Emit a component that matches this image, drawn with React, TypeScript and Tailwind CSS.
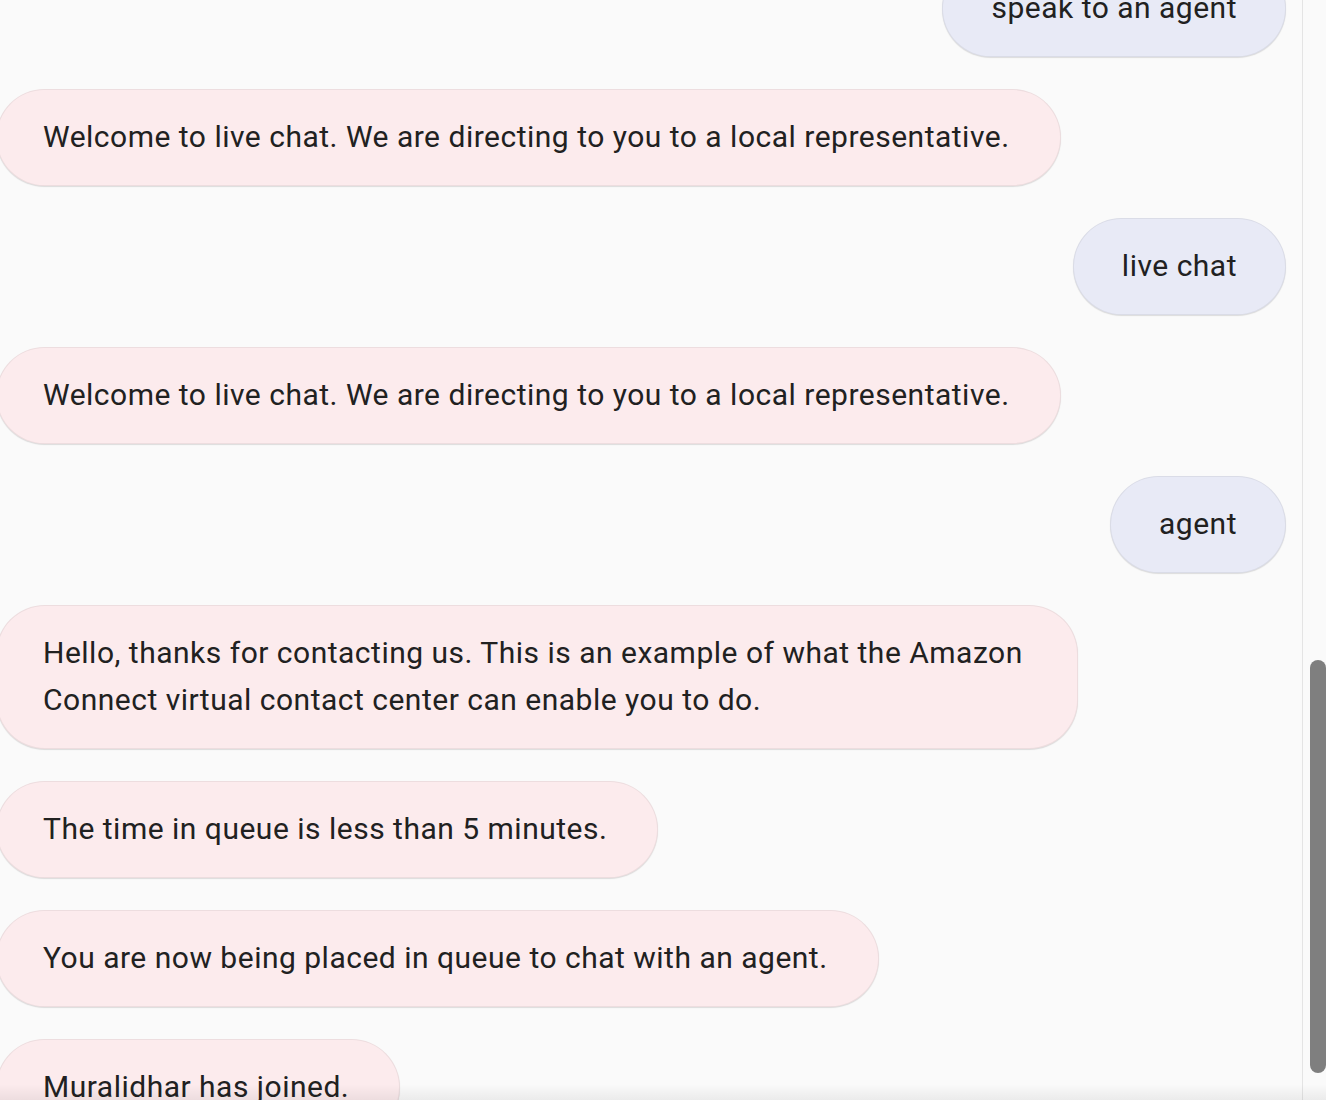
import React from "react";

type Message = { from: "bot" | "user"; text: string };

const MESSAGES: Message[] = [
  { from: "user", text: "speak to an agent" },
  { from: "bot", text: "Welcome to live chat. We are directing to you to a local representative." },
  { from: "user", text: "live chat" },
  { from: "bot", text: "Welcome to live chat. We are directing to you to a local representative." },
  { from: "user", text: "agent" },
  {
    from: "bot",
    text: "Hello, thanks for contacting us. This is an example of what the Amazon Connect virtual contact center can enable you to do.",
  },
  { from: "bot", text: "The time in queue is less than 5 minutes." },
  { from: "bot", text: "You are now being placed in queue to chat with an agent." },
  { from: "bot", text: "Muralidhar has joined." },
];

function Bubble({ msg }: { msg: Message }) {
  const isUser = msg.from === "user";
  return (
    <div className={isUser ? "flex justify-end" : "flex justify-start -ml-[4px]"}>
      <div
        className={
          "max-w-[1082px] rounded-[49px] border border-black/[0.06] pt-[23px] pb-[25px] text-[30px] leading-[47px] tracking-[0.5px] text-[#212121] shadow-[0_1px_1px_rgba(0,0,0,0.12)] " +
          (isUser ? "bg-[#e8eaf6] px-[48px]" : "bg-[#fcebed] pl-[46px] pr-[50px]")
        }
      >
        {msg.text}
      </div>
    </div>
  );
}

export default function App() {
  return (
    <div className="h-[1120px] bg-white font-['Roboto',_'Liberation_Sans',_sans-serif]">
      <div className="relative flex h-[1100px] overflow-hidden bg-[#fafafa]">
        <div className="w-[1303px] shrink-0 overflow-hidden border-r border-[#e4e4e4]">
          {/* chat log, scrolled so the first bubble is cut at the top */}
          <div className="-mt-[40px] flex flex-col gap-[32px] pr-[16px]">
            {MESSAGES.map((m, i) => (
              <Bubble key={i} msg={m} />
            ))}
          </div>
        </div>

        {/* scrollbar */}
        <div className="flex-1 pl-[7px] pt-[660px]">
          <div className="h-[413px] w-[16px] rounded-full bg-[#7f7f7f]" />
        </div>

        <div className="pointer-events-none absolute inset-x-0 bottom-0 h-[16px] bg-gradient-to-b from-transparent to-black/[0.06]" />
      </div>
    </div>
  );
}
